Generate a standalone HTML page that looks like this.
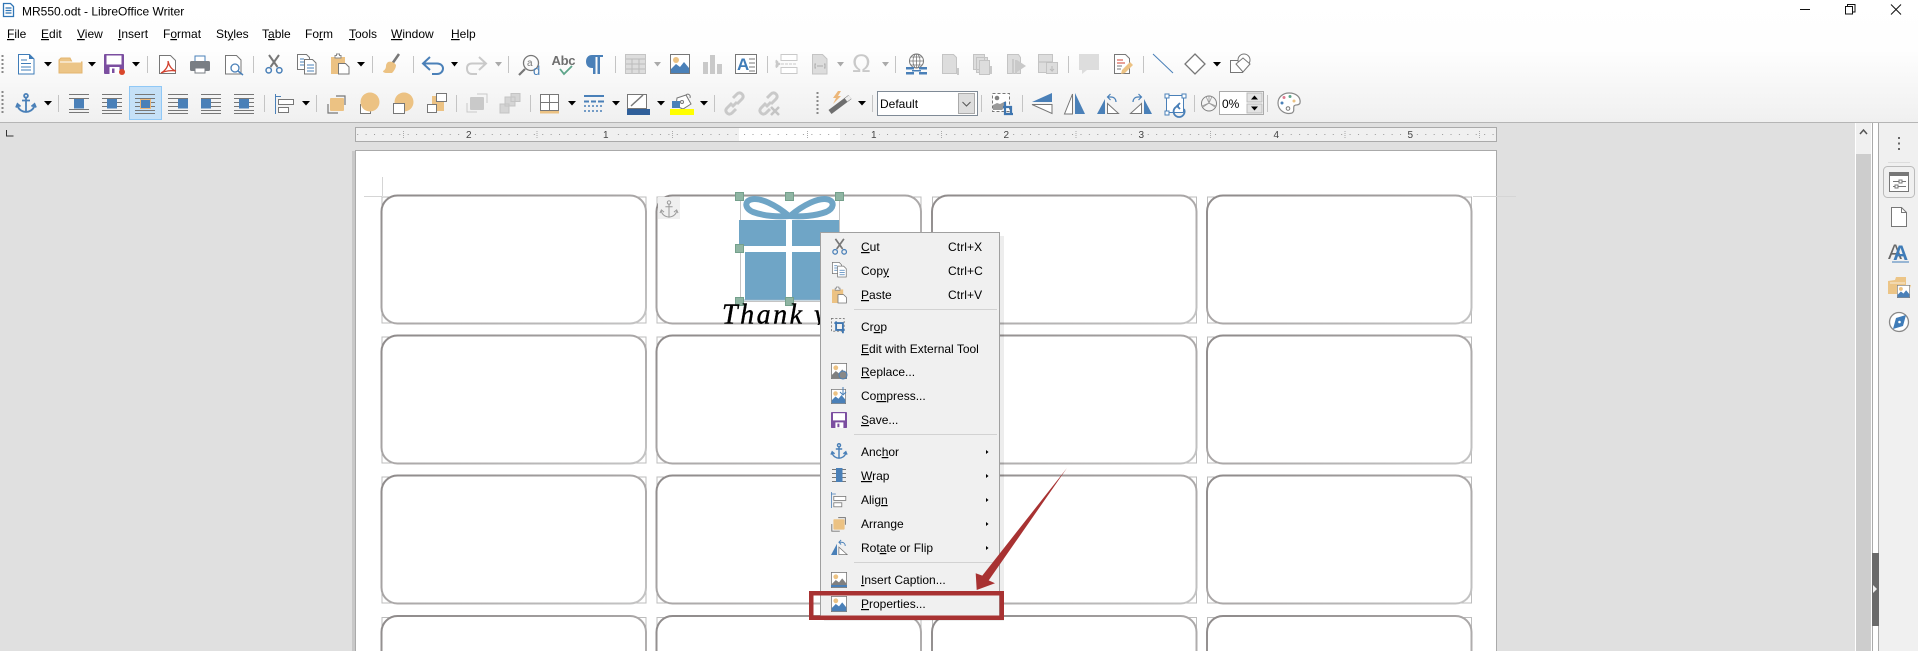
<!DOCTYPE html>
<html><head><meta charset="utf-8"><title>MR550.odt - LibreOffice Writer</title>
<style>
html,body{margin:0;padding:0;width:1918px;height:651px;overflow:hidden;background:#e0e0e0}
svg{display:block;position:absolute;left:0;top:0}
text{font-family:"Liberation Sans",sans-serif;font-size:12px;fill:#000}
.u{text-decoration:underline}
</style></head><body>
<svg width="1918" height="651" viewBox="0 0 1918 651" xmlns="http://www.w3.org/2000/svg">
<defs>
<linearGradient id="tb" x1="0" y1="0" x2="0" y2="1"><stop offset="0" stop-color="#fff"/><stop offset=".4" stop-color="#fefefe"/><stop offset="1" stop-color="#f0f0f0"/></linearGradient>
<linearGradient id="ls" x1="0" y1="0" x2="1" y2="1"><stop offset="0" stop-color="#8e8a8a"/><stop offset=".5" stop-color="#aaa7a7"/><stop offset="1" stop-color="#c4c4c4"/></linearGradient>
<pattern id="dots" width="8.41" height="16" patternUnits="userSpaceOnUse" x="0" y="127"><rect x="4" y="7" width="1" height="1" fill="#999"/></pattern>
<g id="lb"><rect x=".5" y="1.500" width="264" height="126" fill="none" stroke="#bdbdbd"/><rect x="0" y="0" width="264.500" height="128" rx="16" fill="#fff" stroke="url(#ls)" stroke-width="2"/></g>
<g id="cut"><path d="M4 1L12.500 13M14 1L5.500 13" stroke="#777" stroke-width="2" fill="none"/><circle cx="3.700" cy="16.300" r="2.700" fill="none" stroke="#4a80b8" stroke-width="1.500"/><circle cx="14.300" cy="16.300" r="2.700" fill="none" stroke="#4a80b8" stroke-width="1.500"/></g>
<g id="copy"><path d="M.5.5h9l3 3v12H.5z" fill="#fff" stroke="#777"/><path d="M7.500 5.500h8l3.500 3.500v11H7.500z" fill="#fff" stroke="#777"/><path d="M3 5h4M3 8h4M3 11h4M10 11h7M10 14h7M10 17h7" stroke="#4a80b8"/></g>
<g id="paste"><rect x="0" y="3" width="14" height="17" fill="#ecc283"/><path d="M4 4V1.500h1.500V0h3v1.500H10V4z" fill="#fff" stroke="#888"/><path d="M7.500 9.500h7l3.500 3.500v7H7.500z" fill="#fff" stroke="#777"/></g>
<g id="img"><rect x=".5" y=".5" width="19" height="19" fill="#fff" stroke="#777"/><circle cx="6" cy="6" r="3" fill="#ecc283"/><path d="M1 19v-4l5-5 4 3 4-5 5 6v5z" fill="#4a80b8"/></g>
<g id="imgg"><rect x=".5" y=".5" width="19" height="19" fill="#fff" stroke="#777"/><circle cx="6" cy="6" r="3" fill="#ecc283"/><path d="M1 19v-4l5-5 4 3 4-5 5 6v5z" fill="#808080"/></g>
<g id="crop"><rect x=".5" y=".5" width="15" height="15" fill="none" stroke="#777" stroke-dasharray="2.500 2"/><path d="M6 4v10h10M4 6h10v12" fill="none" stroke="#3f76b0" stroke-width="2.200"/></g>
<g id="save"><rect width="20" height="20" rx="1" fill="#7b4ea0"/><rect x="2.500" y="1.500" width="15" height="9" fill="#fff"/><rect x="5.500" y="13" width="10" height="7" fill="#fff"/><rect x="8" y="14.500" width="2.500" height="4.500" fill="#7b4ea0"/></g>
<g id="anc" fill="none" stroke="#4a80b8" stroke-width="1.800"><circle cx="10" cy="2.800" r="1.900"/><path d="M10 5v14M6 7.500h8M1.500 12.500C2.500 17 7 19 10 19s7.500-2 8.500-6.500M0 14.500l1.500-3.500 3 2.500M20 14.500L18.500 11l-3 2.500"/></g>
<path id="wl" d="M0 .5h20M0 4.500h20M0 8.500h20M0 12.500h20M0 16.500h20M0 19.500h20" stroke="#777" fill="none"/>
<g id="a1"><path d="M1 10v9h10M9 2h9v9" fill="none" stroke="#777" stroke-width="1.200"/><rect x="3" y="4" width="14" height="13" rx="1" fill="#ecc283"/></g>
<g id="al"><path d="M.5 0v20" stroke="#4a80b8"/><path d="M0 2.500h6" stroke="#4a80b8"/><rect x="3.500" y="5.500" width="15" height="5" fill="#fff" stroke="#777"/><rect x="3.500" y="13.500" width="10" height="5" fill="#fff" stroke="#777"/></g>
<g id="rl"><path d="M0 20L8 5v15z" fill="#4a80b8"/><path d="M10.500 9.500v10h11z" fill="#fff" stroke="#777"/><path d="M19 8c0-3-2-5-5-5h-3M13.500 0l-3 3 3 3" fill="none" stroke="#4a80b8" stroke-width="1.200"/></g>
<g id="lk" fill="none" stroke="#c9c9c9" stroke-width="3"><path d="M9 10l-5 5c-2 2-1 4 0 5s3 2 5 0l4-4"/><path d="M14 11l5-5c2-2 1-4 0-5s-3-2-5 0l-4 4"/><path d="M9 14l5-5"/></g>
</defs>

<!-- toolbar area -->
<rect width="1918" height="651" fill="#e0e0e0"/>
<rect width="1918" height="122" fill="url(#tb)"/>
<rect y="122" width="1918" height="1" fill="#b5b5b5"/>

<!-- title -->
<path d="M3.500 3.500h7l3 3v10h-10z" fill="#fff" stroke="#2f75b5" stroke-width="1.300"/><path d="M5.500 8h6M5.500 10.500h6M5.500 13h6" stroke="#2f75b5" stroke-width="1.200"/>
<text x="22" y="15.500">MR550.odt - LibreOffice Writer</text>
<path d="M1800 9.500h10" stroke="#111"/>
<path d="M1845.500 6.500h7v7.500h-7zM1847.500 6.500v-2h7.500v7.500h-2.500" fill="none" stroke="#111"/>
<path d="M1891 4.500l10 10M1901 4.500l-10 10" stroke="#111" fill="none"/>

<!-- menu bar -->
<g>
<text x="7" y="38"><tspan class="u">F</tspan>ile</text>
<text x="41" y="38"><tspan class="u">E</tspan>dit</text>
<text x="77" y="38"><tspan class="u">V</tspan>iew</text>
<text x="118" y="38"><tspan class="u">I</tspan>nsert</text>
<text x="163" y="38">F<tspan class="u">o</tspan>rmat</text>
<text x="216" y="38">St<tspan class="u">y</tspan>les</text>
<text x="262" y="38">T<tspan class="u">a</tspan>ble</text>
<text x="305" y="38">Fo<tspan class="u">r</tspan>m</text>
<text x="349" y="38"><tspan class="u">T</tspan>ools</text>
<text x="391" y="38"><tspan class="u">W</tspan>indow</text>
<text x="451" y="38"><tspan class="u">H</tspan>elp</text>
</g>

<!-- grips -->
<path d="M2.500 55v19M2.500 91v23M817.500 92v22" stroke="#888" stroke-width="2" stroke-dasharray="2 2"/>

<!-- separators -->
<path d="M147.500 56v17M253.500 56v17M372.500 56v17M413.500 56v17M508.500 56v17M615.500 56v17M767.500 56v17M895.500 56v17M1068.500 56v17M1143.500 56v17M58.500 95v17M264.500 95v17M316.500 95v17M456.500 95v17M530.500 95v17M714.500 95v17M872.500 95v17M981.500 95v17M1022.500 95v17M1194.500 95v17M1267.500 95v17" stroke="#c4c4c4"/>

<!-- drop arrows -->
<g fill="#000">
<path d="M44 62h8l-4 4.500zM88 62h8l-4 4.500zM132 62h8l-4 4.500zM357 62h8l-4 4.500zM451 62h7l-3.500 4.500zM1213 62h8l-4 4.500z"/>
<path d="M44 101h8l-4 4.500zM302 101h8l-4 4.500zM568 101h8l-4 4.500zM612 101h8l-4 4.500zM657 101h8l-4 4.500zM700 101h8l-4 4.500zM858 101h8l-4 4.500z"/>
</g>
<path d="M495 62h7l-3.500 4.500zM654 62h7l-3.500 4.500zM837 62h7l-3.500 4.500zM882 62h7l-3.500 4.500z" fill="#aaa"/>

<!-- Row 1 icons -->
<path d="M18.500 54.500h11l4.500 4.500v15H18.500z" fill="#fff" stroke="#3f7cb8"/><path d="M29 54l5 5h-5z" fill="#3f7cb8"/><path d="M21 60h6M21 63.500h10M21 67h10M21 70h10" stroke="#3f7cb8"/>
<path d="M59 60v13h23V62H72l-2-4H61z" fill="#ecc587" stroke="#e3b56f"/><path d="M60 62h21" stroke="#fff"/>
<use href="#save" transform="translate(104,54)"/><circle cx="122" cy="72" r="3" fill="#d9472b"/>
<path d="M159.500 55.500h11l5 5v13h-16z" fill="#fff" stroke="#777"/><path d="M168 61c1 5-3 10-7 12 4-2 10-3 15-2-4-1-7-5-8-10z" fill="none" stroke="#d2412f" stroke-width="1.300"/>
<rect x="195" y="56" width="10" height="6" fill="#fff" stroke="#4a80b8"/><rect x="190" y="61" width="20" height="10" rx="1.500" fill="#797e84"/><rect x="195" y="68" width="10" height="5" fill="#fff" stroke="#797e84"/>
<path d="M225.500 55.500h11l4.500 4.500v14h-15.500z" fill="#fff" stroke="#777"/><circle cx="235" cy="68" r="4" fill="#fff" stroke="#4a80b8" stroke-width="1.300"/><path d="M238 71l5 4" stroke="#4a80b8" stroke-width="1.500"/>
<use href="#cut" transform="translate(265,54)"/>
<use href="#copy" transform="translate(297,54)"/>
<use href="#paste" transform="translate(331,54)"/>
<path d="M399 54l-7 10" stroke="#777" stroke-width="2.500"/><path d="M388 62c3-1 6 0 8 3 0 3-2 6-4 8h-5c-3 0-4-1-4-2 2-1 3-3 3-5 0-2 1-3 2-4z" fill="#ecc283"/>
<path d="M430 57l-7 6.500 7 6.500M423 63.500h14c4 0 6 2.500 6 5s-2 5.500-6 5.500h-5" fill="none" stroke="#4a80b8" stroke-width="2"/>
<path d="M479 57l7 6.500-7 6.500M486 63.500h-14c-4 0-5 2.500-5 5s1 5.500 5 5.500h5" fill="none" stroke="#c9c9c9" stroke-width="2"/>
<circle cx="531" cy="63" r="7.500" fill="none" stroke="#777" stroke-width="1.300"/><path d="M525 69l-6 6" stroke="#777" stroke-width="2.200"/><text x="527" y="66" style="font-size:10px;fill:#777">a</text><text x="533" y="75" style="font-size:13px;fill:#4a80b8">d</text>
<text x="551.500" y="65" style="font-size:13px;font-weight:bold;fill:#6f6f6f;letter-spacing:-.3px">Abc</text><path d="M560 69l4 5 8-8" fill="none" stroke="#5ea58a" stroke-width="1.800"/>
<path d="M595 55h-3c-4 0-6 3-6 6.500s2 6.500 6 6.500h1v6h2.500V57h2v17H600V57h3v-2z" fill="#4a80b8"/>
<rect x="625.500" y="54.500" width="20" height="19" fill="#ddd" stroke="#c4c4c4"/><path d="M626 59h19M626 64h19M626 69h19M632 59v14M639 59v14" stroke="#bbb"/>
<use href="#img" transform="translate(670,54)"/>
<path d="M703 62h5v12h-5zM710 55h5v19h-5zM717 64h5v10h-5z" fill="#c9c9c9"/>
<rect x="735.500" y="54.500" width="21" height="19" fill="#fff" stroke="#777"/><text x="737" y="70" style="font-size:17px;fill:#3f7cb8;font-weight:bold">A</text><path d="M749 59h6M749 63h6M749 67h6M749 71h6" stroke="#777"/>
<path d="M781 54.500h16v6h-16zM781 67.500h16v6h-16z" fill="#fff" stroke="#c9c9c9"/><path d="M776 60l4 4-4 4zM781 64h16" fill="#c9c9c9" stroke="#c9c9c9" stroke-dasharray="3 1"/>
<path d="M812.500 54.500h10l4.500 4.500v15h-14.500z" fill="#ddd" stroke="#c4c4c4"/><path d="M816 64h-1v4h1M824 64h1v4h-1M817 66h6" stroke="#aaa" fill="none"/>
<text x="852" y="72" style="font-size:25px;fill:#c9c9c9">Ω</text>
<circle cx="916.500" cy="61" r="7" fill="#fff" stroke="#777"/><path d="M909.500 61h14M916.500 54v14M911 57h11M911 65h11" stroke="#777" fill="none" stroke-width=".8"/><ellipse cx="916.500" cy="61" rx="3.500" ry="7" fill="none" stroke="#777" stroke-width=".8"/>
<path d="M906 67h8v2.500h-8zM919 67h8v2.500h-8zM912 70h9v1.500h-9zM906 72h8v2.500h-8zM919 72h8v2.500h-8z" fill="#4a80b8"/>
<path d="M942.500 54.500h11l3 3v16h-14z" fill="#ddd" stroke="#c4c4c4"/><path d="M958 68v7" stroke="#c9c9c9" stroke-width="2"/>
<path d="M973.500 54.500h11v15h-11zM976.500 57.500h11v15h-11z" fill="#ddd" stroke="#c4c4c4"/><path d="M979.500 60.500h10v14h-10z" fill="#ddd" stroke="#c4c4c4"/><path d="M991 66v8" stroke="#c9c9c9" stroke-width="2"/>
<path d="M1007.500 54.500h11l2 3v16h-13z" fill="#ddd" stroke="#c4c4c4"/><path d="M1013 59v15M1016 60v14" stroke="#c9c9c9" stroke-width="2"/><path d="M1017 60l9 6-9 6z" fill="#c9c9c9"/>
<rect x="1038.500" y="54.500" width="14" height="18" fill="#ddd" stroke="#c4c4c4"/><rect x="1046.500" y="62.500" width="11" height="11" fill="#ddd" stroke="#c4c4c4"/><path d="M1039 62h13M1052 66v5l-2-2m2 2l2-2" stroke="#bbb" fill="none"/>
<path d="M1079 54h20v16h-12l-5 4v-4h-3z" fill="#ddd"/>
<path d="M1114.500 54.500h11l4 4v15h-15z" fill="#fff" stroke="#777"/><path d="M1117 60h6M1117 63h8" stroke="#d2412f"/><path d="M1117 66h5M1117 69h4" stroke="#777"/><path d="M1121 74l1-4 8-8 3 3-8 8z" fill="#ecc283"/>
<path d="M1153 54l20 19" stroke="#4a80b8"/>
<path d="M1195 54l10 10-10 10-10-10z" fill="#fff" stroke="#777" stroke-width="1.300"/>
<rect x="1230.500" y="60.500" width="12" height="12" fill="#fff" stroke="#777"/><circle cx="1244" cy="60" r="6" fill="#fff" stroke="#777"/><path d="M1243 58l7 6-7 8-7-8z" fill="#fff" stroke="#777"/>

<!-- Row 2 icons -->
<use href="#anc" transform="translate(16,93)"/>
<path d="M69 94.500h20M69 98.500h20M69 109.500h20M69 112.500h20" stroke="#777"/><rect x="74" y="99" width="10" height="9.500" fill="#4a80b8"/>
<use href="#wl" transform="translate(102,94)"/><rect x="107" y="99" width="10" height="9.500" fill="#4a80b8"/>
<rect x="129.500" y="86.500" width="32" height="33" fill="#c5e0f7" stroke="#90c8f6"/>
<use href="#wl" transform="translate(135,94)"/><rect x="140.500" y="99.500" width="10" height="9" fill="#4a80b8" stroke="#ecb77a"/>
<use href="#wl" transform="translate(168,94)"/><rect x="178" y="99" width="10" height="9.500" fill="#4a80b8"/>
<use href="#wl" transform="translate(201,94)"/><rect x="201" y="99" width="10" height="9.500" fill="#4a80b8"/>
<use href="#wl" transform="translate(234,94)"/><rect x="239" y="99" width="10" height="9.500" fill="#4a80b8"/>
<use href="#al" transform="translate(275,94)"/>
<use href="#a1" transform="translate(327,94)"/>
<rect x="360.500" y="104.500" width="10" height="9" fill="#fff" stroke="#777"/><circle cx="370" cy="102" r="9.500" fill="#ecc283"/>
<circle cx="404" cy="102" r="9.500" fill="#ecc283"/><rect x="393.500" y="103.500" width="11" height="10" fill="#fff" stroke="#777"/>
<rect x="432" y="96" width="12" height="15" fill="#ecc283"/><rect x="436.500" y="93.500" width="10" height="8" fill="#fff" stroke="#777"/><rect x="427.500" y="104.500" width="9" height="8" fill="#fff" stroke="#777"/>
<path d="M467 103v9h10M477 94h10v9" fill="none" stroke="#c9c9c9"/><rect x="470" y="97" width="14" height="13" rx="1" fill="#c9c9c9"/>
<path d="M505 97h10v9h-10zM511 93.500h9v8h-9zM500 104h9v9h-9z" fill="#d5d5d5" stroke="#c4c4c4"/>
<path d="M540.500 94.500h18v16h-18zM549.500 94.500v16M540.500 102.500h18" fill="#fff" stroke="#777"/><rect x="540" y="111" width="19" height="2.500" fill="#ecc283"/>
<path d="M584 95h20v2h-20zM584 100.500h5v2h-5zM591 100.500h5v2h-5zM598 100.500h6v2h-6zM584 105.500h20" fill="#4a80b8"/><path d="M584 106h20M584 111h20" stroke="#4a80b8" stroke-width="1.500" stroke-dasharray="2 2"/>
<rect x="627.500" y="94.500" width="19" height="14" fill="#fff" stroke="#777"/><path d="M631 106l12-11" stroke="#777" stroke-width="1.500"/><rect x="627" y="109" width="23" height="6" fill="#2f5f9a"/>
<path d="M677 98l9-3 5 9-8 5-7-3z" fill="#fff" stroke="#777"/><path d="M672 101h8v7h-8z" fill="#4a80b8"/><circle cx="682" cy="102" r="1.500" fill="none" stroke="#777"/><path d="M686 95c2-2 5 0 4 3" fill="none" stroke="#777"/><rect x="670" y="109" width="24" height="6" fill="#ff0"/>
<use href="#lk" transform="translate(723,93)"/>
<use href="#lk" transform="translate(757,93)"/><path d="M771 107l8 8M779 107l-8 8" stroke="#c4c4c4" stroke-width="2.500"/>
<path d="M838 91l-5 7h3l-3 6 8-8h-3l3-5z" fill="#ecb77a"/><path d="M830 112l20-15" stroke="#6f6f6f" stroke-width="5"/><path d="M846 100l4-3" stroke="#eee" stroke-width="4"/>
<rect x="877.500" y="91.500" width="100" height="24" fill="#fff" stroke="#7f8a96"/>
<rect x="958.500" y="93.500" width="16" height="20" fill="#ddd" stroke="#aaa"/><path d="M962.500 102l4 4 4-4" fill="none" stroke="#555"/>
<text x="880" y="108">Default</text>
<rect x="992.500" y="93.500" width="17" height="18" fill="#fff" stroke="#777" stroke-dasharray="3 2"/><circle cx="997" cy="98" r="2.300" fill="#808080"/><path d="M993 110v-5l4-2 3 1 6-3v5l-4 4z" fill="#9a9a9a"/><path d="M1005 102v12h8M1003 107h8v8" fill="none" stroke="#3f76b0" stroke-width="2.200"/>
<path d="M1032 102l20-9v9z" fill="#4a80b8"/><path d="M1032 104.500l20 9v-9z" fill="#fff" stroke="#777"/>
<path d="M1072.500 94v20h-8z" fill="#fff" stroke="#777"/><path d="M1075 93l10 21h-10z" fill="#4a80b8"/>
<use href="#rl" transform="translate(1097,94)"/>
<g transform="translate(1152,94) scale(-1,1)"><use href="#rl"/></g>
<rect x="1166.500" y="95.500" width="17" height="17" fill="#fff" stroke="#4a80b8" rx="1"/><path d="M1165 94h4v4h-4zM1182 94h4v4h-4zM1165 111h4v4h-4z" fill="#fff" stroke="#4a80b8"/><path d="M1186 108a5.500 5.500 0 1 1-5-3h-2m3-3l-3 3 3 3" fill="none" stroke="#4a80b8" stroke-width="1.800" transform="translate(-2,1)"/>
<circle cx="1209" cy="103.500" r="7.500" fill="#f4f4f4" stroke="#808080"/><path d="M1209 96v7l-6 4m6-4l6 4M1206 96.500l3 6.500 3-6.500M1202 106l7-3 7 3" fill="none" stroke="#999" stroke-width=".8"/>
<rect x="1219.500" y="91.500" width="44" height="23" fill="#fff" stroke="#aaa"/>
<text x="1222" y="108">0%</text>
<rect x="1247" y="93" width="15" height="9" fill="#e3e3e3" stroke="#bbb"/><rect x="1247" y="104" width="15" height="9" fill="#e3e3e3" stroke="#bbb"/><path d="M1251 99.500h7l-3.500-4zM1251 106.500h7l-3.500 4z" fill="#000"/>
<path d="M1289 93c7 0 12 4 11 10-1 3-5 1-6 3-1 3 1 5-2 7-7 2-14-3-14-10 0-6 5-10 11-10z" fill="#fff" stroke="#8a8a8a" stroke-width="1.200"/><circle cx="1284" cy="97.500" r="1.500" fill="#e07a90"/><circle cx="1290" cy="96.500" r="1.500" fill="#5ea58a"/><circle cx="1294" cy="101" r="1.500" fill="#ecc283"/><circle cx="1282" cy="103" r="1.500" fill="#4a80b8"/><circle cx="1288" cy="108.500" r="1.800" fill="none" stroke="#777"/>

<!-- ruler -->
<path d="M6.500 130v6h7" fill="none" stroke="#333"/>
<rect x="355.500" y="127.500" width="1141" height="14" fill="#f0f0f0" stroke="#aaa"/>
<rect x="739" y="128" width="101" height="13" fill="#fff"/>
<rect x="356" y="128" width="1140" height="13" fill="url(#dots)"/>
<path d="M403.500 131v7M537 131v7M672.500 131v7M807.500 131v7M941.500 131v7M1076 131v7M1210.500 131v7M1345 131v7M1479.500 131v7" stroke="#aaa" stroke-dasharray="1 1"/>
<rect x="463" y="128" width="11" height="13" fill="#f0f0f0"/><rect x="601" y="128" width="10" height="13" fill="#f0f0f0"/><rect x="869" y="128" width="10" height="13" fill="#f0f0f0"/><rect x="1001" y="128" width="11" height="13" fill="#f0f0f0"/><rect x="1136" y="128" width="11" height="13" fill="#f0f0f0"/><rect x="1271" y="128" width="11" height="13" fill="#f0f0f0"/><rect x="1405" y="128" width="11" height="13" fill="#f0f0f0"/>
<g><text x="466" y="138" style="font-size:10px;fill:#444">2</text><text x="603" y="138" style="font-size:10px;fill:#444">1</text><text x="871" y="138" style="font-size:10px;fill:#444">1</text><text x="1003.500" y="138" style="font-size:10px;fill:#444">2</text><text x="1138.500" y="138" style="font-size:10px;fill:#444">3</text><text x="1273.500" y="138" style="font-size:10px;fill:#444">4</text><text x="1407.500" y="138" style="font-size:10px;fill:#444">5</text></g>

<!-- page -->
<rect x="352" y="151" width="4" height="500" fill="#c8c8c8"/>
<rect x="355.500" y="150.500" width="1141" height="520" fill="#fff" stroke="#aaa"/>
<path d="M382.500 177v19M364 196.500h18M1473 196.500h43" stroke="#d5d5d5"/>

<!-- labels -->
<use href="#lb" transform="translate(381.500,195.500)"/><use href="#lb" transform="translate(656.500,195.500)"/><use href="#lb" transform="translate(932,195.500)"/><use href="#lb" transform="translate(1207,195.500)"/>
<use href="#lb" transform="translate(381.500,335.500)"/><use href="#lb" transform="translate(656.500,335.500)"/><use href="#lb" transform="translate(932,335.500)"/><use href="#lb" transform="translate(1207,335.500)"/>
<use href="#lb" transform="translate(381.500,475.500)"/><use href="#lb" transform="translate(656.500,475.500)"/><use href="#lb" transform="translate(932,475.500)"/><use href="#lb" transform="translate(1207,475.500)"/>
<use href="#lb" transform="translate(381.500,616)"/><use href="#lb" transform="translate(656.500,616)"/><use href="#lb" transform="translate(932,616)"/><use href="#lb" transform="translate(1207,616)"/>

<!-- anchor tag -->
<rect x="658" y="197" width="22" height="22" fill="#f0f0f0"/>
<g transform="translate(660,200) scale(.9)"><g fill="none" stroke="#999" stroke-width="1.100"><circle cx="10" cy="2.800" r="1.900"/><path d="M10 5v14M6 7.500h8M1.500 12.500C2.500 17 7 19 10 19s7.500-2 8.500-6.500M0 14.500l1.500-3.500 3 2.500M20 14.500L18.500 11l-3 2.500"/></g></g>

<!-- gift -->
<rect x="740.500" y="196.500" width="99" height="105" fill="none" stroke="#c4c4c4"/>
<path d="M739 220h100v80H745v-48h-6z" fill="#6fa5c6"/>
<rect x="786" y="220" width="6" height="80" fill="#fff"/><rect x="739" y="246" width="100" height="6" fill="#fff"/>
<path d="M789 216C776 205 760 197 751 199.500c-7 2-6 9 2 12.500 11 4 25 5 36 4z" fill="none" stroke="#6fa5c6" stroke-width="6"/>
<path d="M790 216C803 205 819 197 828 199.500c7 2 6 9-2 12.500-11 4-25 5-36 4z" fill="none" stroke="#6fa5c6" stroke-width="6"/>
<path d="M739 300h100" stroke="#8fb0c6"/>
<g fill="#8fb5a3" stroke="#74a08c"><rect x="735.500" y="192.500" width="8" height="8"/><rect x="785.500" y="192.500" width="8" height="8"/><rect x="835.500" y="192.500" width="8" height="8"/><rect x="735.500" y="244.500" width="8" height="8"/><rect x="735.500" y="297.500" width="8" height="8"/><rect x="785.500" y="297.500" width="8" height="8"/></g>
<svg x="700" y="300" width="130" height="25"><text x="22" y="23.500" style="font-family:'Liberation Serif',serif;font-style:italic;font-size:28px;letter-spacing:2.500px;stroke:#000;stroke-width:.4px">Thank you</text></svg>

<!-- scrollbar and sidebar -->
<rect x="1855" y="123" width="1" height="528" fill="#fff"/>
<rect x="1856" y="123" width="15" height="528" fill="#cdcdcd"/>
<rect x="1856" y="123" width="15" height="31" fill="#f0f0f0"/>
<path d="M1860 134l3.500-4 3.500 4" fill="none" stroke="#555" stroke-width="1.500"/>
<rect x="1871" y="123" width="8" height="528" fill="#fff"/>
<rect x="1872" y="123" width="1" height="528" fill="#aaa"/><rect x="1878" y="123" width="1" height="528" fill="#aaa"/>
<rect x="1872" y="553" width="7" height="73" fill="#6a6a6a"/><path d="M1873 585l4 4-4 4z" fill="#f0f0f0"/>
<rect x="1879" y="123" width="39" height="528" fill="#f0f0f0"/>
<path d="M1899 137v2M1899 142.500v2M1899 148v2" stroke="#666" stroke-width="2"/>
<path d="M1888 162.500h22" stroke="#ddd"/>
<rect x="1883.500" y="166.500" width="31" height="31" rx="4" fill="#f0f0f0" stroke="#bbb"/>
<rect x="1889.500" y="172.500" width="19" height="19" fill="#fff" stroke="#777"/><rect x="1889" y="172" width="20" height="4" fill="#777"/><path d="M1893 181.500h13M1893 186.500h13" stroke="#777"/><rect x="1899" y="180" width="3" height="3" fill="#fff" stroke="#777"/><rect x="1895" y="185" width="3" height="3" fill="#fff" stroke="#777"/>
<path d="M1891.500 207.500h10l5 5v14h-15z" fill="#fff" stroke="#777"/><path d="M1901.500 207.500v5h5" fill="none" stroke="#777"/>
<text x="1888" y="259" style="font-size:21px;fill:#666">A</text><text x="1893" y="260" style="font-size:21px;font-weight:bold;fill:#3f7cb8">A</text><path d="M1892 262h17" stroke="#3f7cb8"/>
<path d="M1888 294V281l7-1 1-3h10v8h5l-3 9z" fill="#ecc587"/><path d="M1890 283h15" stroke="#fff" opacity=".7"/><g transform="translate(1897,285) scale(.65)"><use href="#img"/></g>
<circle cx="1899" cy="322" r="9.500" fill="#fff" stroke="#888" stroke-width="1.300"/><path d="M1906 315l-10 3-3 11 10-3z" fill="#3f7cb8"/><circle cx="1899.500" cy="322" r="1.300" fill="#fff"/>

<!-- context menu -->
<rect x="824" y="236" width="180" height="385" fill="#000" opacity=".07"/>
<rect x="820.500" y="232.500" width="179" height="386" fill="#f0f0f0" stroke="#a0a0a0"/>
<path d="M854 309.500h143M854 434.500h143M854 562.500h143" stroke="#d2d2d2"/>
<use href="#cut" transform="translate(832,238) scale(.85)"/>
<use href="#copy" transform="translate(832,262) scale(.75)"/>
<use href="#paste" transform="translate(832,287) scale(.8)"/>
<use href="#crop" transform="translate(831,318) scale(.85)"/>
<use href="#imgg" transform="translate(831,363) scale(.8)"/><circle cx="843" cy="375" r="4" fill="#888" stroke="#4a80b8"/>
<use href="#img" transform="translate(831,389) scale(.75)"/><path d="M843 387v8m-3-3l3 3 3-3" fill="none" stroke="#4a80b8"/>
<use href="#save" transform="translate(831,412) scale(.8)"/>
<use href="#anc" transform="translate(831,443) scale(.8)"/>
<path d="M832 469.500h4M832 473.500h4M832 477.500h4M832 481.500h4M842 469.500h4M842 473.500h4M842 477.500h4M842 481.500h4" stroke="#777"/><rect x="836" y="468" width="6.500" height="14" fill="#4a80b8"/>
<use href="#al" transform="translate(831,492) scale(.8)"/>
<use href="#a1" transform="translate(831,516) scale(.8)"/>
<use href="#rl" transform="translate(831,540) scale(.75)"/>
<use href="#imgg" transform="translate(831,572) scale(.8)"/><rect x="831" y="585" width="16" height="2" fill="#4a80b8"/>
<use href="#img" transform="translate(831,596) scale(.8)"/>

<text x="861" y="251"><tspan class="u">C</tspan>ut</text><text x="948" y="251" style="letter-spacing:.1px">Ctrl+X</text>
<text x="861" y="275">Cop<tspan class="u">y</tspan></text><text x="948" y="275" style="letter-spacing:.1px">Ctrl+C</text>
<text x="861" y="299"><tspan class="u">P</tspan>aste</text><text x="948" y="299" style="letter-spacing:.1px">Ctrl+V</text>
<text x="861" y="331">Cr<tspan class="u">o</tspan>p</text>
<text x="861" y="353"><tspan class="u">E</tspan>dit with External Tool</text>
<text x="861" y="376"><tspan class="u">R</tspan>eplace...</text>
<text x="861" y="400">Co<tspan class="u">m</tspan>press...</text>
<text x="861" y="424"><tspan class="u">S</tspan>ave...</text>
<text x="861" y="456">Anc<tspan class="u">h</tspan>or</text>
<text x="861" y="480"><tspan class="u">W</tspan>rap</text>
<text x="861" y="504">Alig<tspan class="u">n</tspan></text>
<text x="861" y="528">Arran<tspan class="u">g</tspan>e</text>
<text x="861" y="552">Rot<tspan class="u">a</tspan>te or Flip</text>
<text x="861" y="584"><tspan class="u">I</tspan>nsert Caption...</text>
<text x="861" y="608"><tspan class="u">P</tspan>roperties...</text>
<path d="M986 450v4l2.500-2zM986 474v4l2.500-2zM986 498v4l2.500-2zM986 522v4l2.500-2zM986 546v4l2.500-2z" fill="#000"/>

<!-- red annotation -->
<rect x="811.250" y="593.250" width="190.500" height="24.500" fill="none" stroke="#a83232" stroke-width="4.500"/>
<path d="M1067 468L988.700 580.400 995 583.300 976.700 590 975.700 573.300 982.300 575.600z" fill="#a83232"/>
</svg>
</body></html>
